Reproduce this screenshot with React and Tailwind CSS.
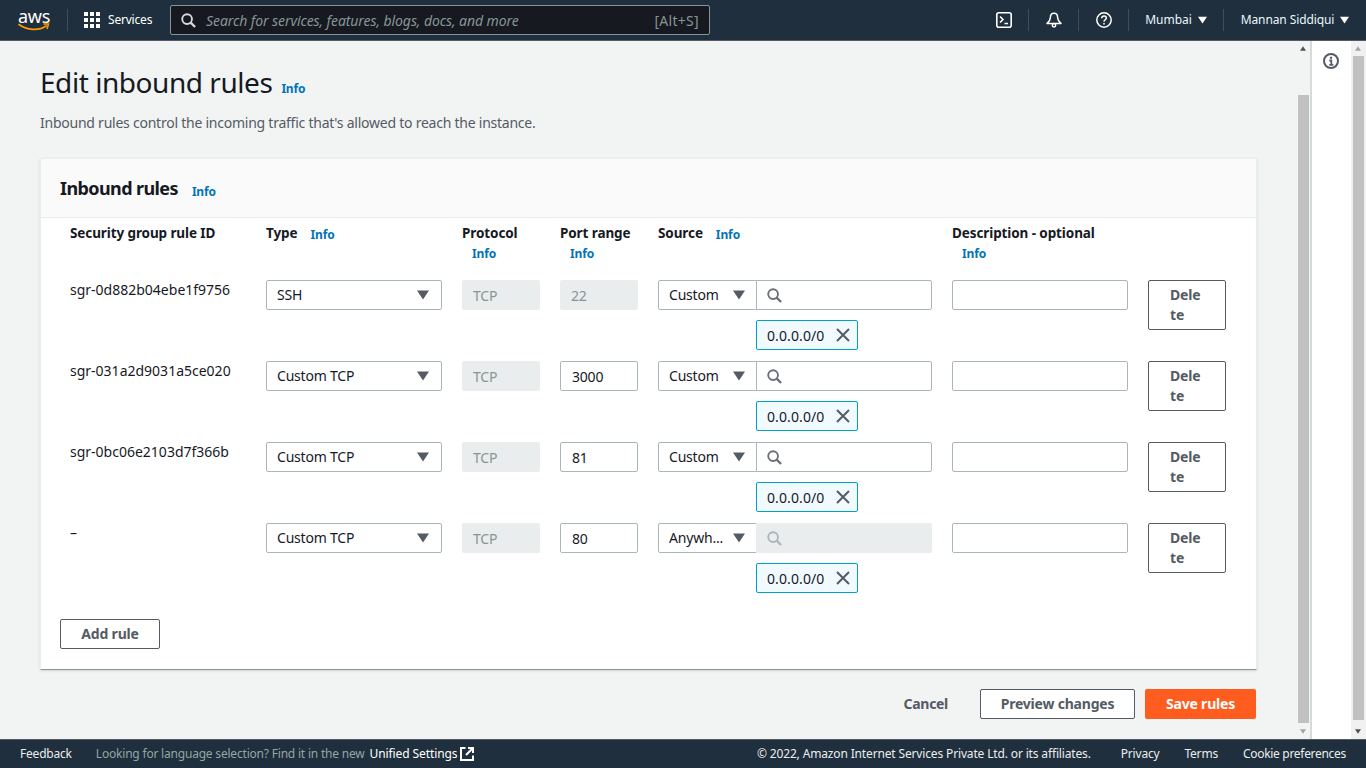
import React from "react";

const rules = [
  { id: "sgr-0d882b04ebe1f9756", type: "SSH", port: "22", portLocked: true, source: "Custom" },
  { id: "sgr-031a2d9031a5ce020", type: "Custom TCP", port: "3000", source: "Custom" },
  { id: "sgr-0bc06e2103d7f366b", type: "Custom TCP", port: "81", source: "Custom" },
  { id: "–", type: "Custom TCP", port: "80", source: "Anywh...", searchLocked: true },
];

const Info = ({ className = "" }) => (
  <a className={`text-[12px] leading-5 font-bold text-[#0073bb] ${className}`}>Info</a>
);

const Caret = ({ className = "" }) => (
  <svg viewBox="0 0 12 10" className={className} fill="currentColor">
    <path d="M0 0.5h12L6 9.5z" />
  </svg>
);

const SearchIcon = ({ className = "" }) => (
  <svg viewBox="0 0 16 16" className={className} fill="none" stroke="currentColor" strokeWidth="2">
    <circle cx="6.500" cy="6.500" r="5.200" />
    <path d="M10.300 10.300L15 15" strokeWidth="2.400" />
  </svg>
);

const CloseIcon = () => (
  <svg viewBox="0 0 14 14" className="w-[14px] h-[14px] text-[#545b64]" fill="none" stroke="currentColor" strokeWidth="2">
    <path d="M1 1l12 12M13 1L1 13" />
  </svg>
);

const Divider = () => <div className="h-[22px] w-px bg-[#414d5c]" />;

const Scrollbar = ({ spacer, thumb, topArrow, bottomArrow }) => (
  <div className="flex flex-col items-center shrink-0 w-[14px] h-full">
    <div className={`h-[15px] w-full flex items-center justify-center ${topArrow}`}>
      <Caret className="w-2 h-[5px] rotate-180" />
    </div>
    <div className={spacer} />
    <div className={`w-[11px] bg-[#c1c1c1] ${thumb}`} />
    <div className="flex-1" />
    <div className={`h-[15px] w-full flex items-center justify-center ${bottomArrow}`}>
      <Caret className="w-2 h-[5px]" />
    </div>
  </div>
);

const RuleRow = ({ rule }) => (
  <div className="grid grid-cols-[176px_176px_78px_78px_274px_176px_78px] gap-x-5 text-[14px] text-[#16191f]">
    <div className="leading-5 tracking-[0px]">{rule.id}</div>
    <div className="h-[30px] border border-[#aab7b8] rounded-[2px] bg-white flex items-center justify-between pl-[10px] pr-[12px]">
      <span className="-mt-px">{rule.type}</span>
      <Caret className="w-3 h-[10px] text-[#545b64]" />
    </div>
    <div className="h-[30px] rounded-[2px] bg-[#eaeded] text-[#879596] flex items-center px-[11px]">TCP</div>
    {rule.portLocked ? (
      <div className="h-[30px] rounded-[2px] bg-[#eaeded] text-[#879596] flex items-center px-[11px]">{rule.port}</div>
    ) : (
      <div className="h-[30px] border border-[#aab7b8] rounded-[2px] bg-white flex items-center px-[11px]">{rule.port}</div>
    )}
    <div className="flex flex-col gap-[10px]">
      <div className="flex h-[30px]">
        <div className="w-[99px] shrink-0 border border-[#aab7b8] rounded-l-[2px] bg-white flex items-center justify-between pl-[10px] pr-[11px]">
          <span className="-mt-px">{rule.source}</span>
          <Caret className="w-3 h-[10px] text-[#545b64]" />
        </div>
        {rule.searchLocked ? (
          <div className="flex-1 -ml-px rounded-r-[2px] bg-[#eaeded] flex items-center pl-[11px]">
            <SearchIcon className="w-[15px] h-[15px] text-[#aab7b8]" />
          </div>
        ) : (
          <div className="flex-1 -ml-px border border-[#aab7b8] rounded-r-[2px] bg-white flex items-center pl-[10px]">
            <SearchIcon className="w-[15px] h-[15px] text-[#687078]" />
          </div>
        )}
      </div>
      <div className="ml-[98px] w-[102px] h-[30px] border border-[#00a1c9] rounded-[2px] bg-[#f1faff] flex items-center justify-between pl-[10px] pr-[7px]">
        <span className="tracking-[0.1px]">0.0.0.0/0</span>
        <CloseIcon />
      </div>
    </div>
    <div className="h-[30px] border border-[#aab7b8] rounded-[2px] bg-white" />
    <button className="h-[50px] border border-[#545b64] rounded-[2px] bg-white text-left pl-[21px] pr-[23px] leading-5 font-bold text-[#545b64] break-all">
      Delete
    </button>
  </div>
);

export default function App() {
  return (
    <div className="w-[1366px] h-screen overflow-hidden flex flex-col bg-[#f2f3f3] font-['Noto_Sans',sans-serif] tracking-[-0.2px]">
      {/* top nav */}
      <header className="h-[41px] shrink-0 bg-[#1f2f3d] border-b border-[#545b64] flex items-center text-white text-[12px]">
        <div className="w-[67px] flex flex-col items-center pl-[1px]">
          <span className="text-[18px] leading-[14px] tracking-[-0.3px]">aws</span>
          <svg viewBox="0 0 32 9" className="w-8 h-[9px]" fill="none">
            <path d="M1 1.500c8 6 20 6.500 27 1.500" stroke="#ff9900" strokeWidth="1.800" strokeLinecap="round" />
            <path d="M25.500 1h5l-1.500 5" stroke="#ff9900" strokeWidth="1.500" />
          </svg>
        </div>
        <div className="h-[22px] w-px bg-[#414d5c]" />
        <div className="ml-[16px] grid grid-cols-3 gap-[2px] w-4">
          {Array.from({ length: 9 }).map((_, i) => (
            <span key={i} className="w-1 h-1 bg-white" />
          ))}
        </div>
        <span className="ml-2 w-[45px]">Services</span>
        <div className="ml-[17px] w-[540px] h-[30px] bg-[#16191f] border border-[#879596] rounded-[2px] flex items-center pl-[10px] pr-[10px]">
          <SearchIcon className="w-[15px] h-[15px] text-[#d5dbdb]" />
          <span className="ml-[10px] italic text-[14px] tracking-[-0.08px] text-[#879596] flex-1">Search for services, features, blogs, docs, and more</span>
          <span className="text-[14px] tracking-[0.3px] text-[#879596] mt-px">[Alt+S]</span>
        </div>
        <div className="ml-auto flex items-center">
          <div className="w-[49px] flex justify-center">
            <svg viewBox="0 0 16 16" className="w-4 h-4" fill="none" stroke="white" strokeWidth="1.600">
              <rect x="0.800" y="0.800" width="14.400" height="14.400" rx="2" />
              <path d="M4 4.500l3 3-3 3M8.500 11.500h3.500" />
            </svg>
          </div>
          <Divider />
          <div className="w-[49px] flex justify-center">
            <svg viewBox="0 0 16 16" className="w-4 h-4" fill="none" stroke="white" strokeWidth="1.500">
              <path d="M8 1.200c-2.400 0-3.600 2-3.600 4.200 0 3-2.200 4.800-3.400 6h14c-1.200-1.200-3.400-3-3.400-6 0-2.200-1.200-4.200-3.600-4.200z" strokeLinejoin="round" />
              <circle cx="8" cy="13.300" r="1.700" />
            </svg>
          </div>
          <Divider />
          <div className="w-[49px] flex justify-center">
            <svg viewBox="0 0 16 16" className="w-4 h-4" fill="none" stroke="white" strokeWidth="1.500">
              <circle cx="8" cy="8" r="7.200" />
              <path d="M5.700 6.200c0-1.400 1-2.200 2.300-2.200s2.300.8 2.300 2.100c0 1.900-2.300 1.800-2.300 3.600" />
              <path d="M8 11v1.500" />
            </svg>
          </div>
          <Divider />
          <div className="w-[94px] flex items-center justify-center gap-[6px] text-[#eaf6ff] tracking-[-0.05px]">
            Mumbai
            <Caret className="w-[9px] h-2 text-white" />
          </div>
          <Divider />
          <div className="w-[142px] flex items-center justify-center gap-[6px] text-[#eaf6ff] tracking-[-0.1px]">
            Mannan Siddiqui
            <Caret className="w-[9px] h-2 text-white" />
          </div>
        </div>
      </header>

      <div className="flex flex-1 min-h-0">
        {/* page */}
        <main className="w-[1296px] shrink-0 pt-[23px] pl-10 pr-[39px]">
          <div className="flex items-end gap-[9px]">
            <h1 className="text-[28px] leading-9 tracking-[-0.45px] text-[#16191f]">Edit inbound rules</h1>
            <Info className="mb-px" />
          </div>
          <p className="mt-[13px] text-[14px] leading-5 tracking-[-0.24px] text-[#545b64]">
            Inbound rules control the incoming traffic that's allowed to reach the instance.
          </p>

          <section className="mt-[25px] bg-white border border-[#eaeded] border-b-[#879596] shadow-sm">
            <div className="h-[59px] bg-[#fafafa] border-b border-[#eaeded] flex items-center pl-[19px] gap-[14px]">
              <h2 className="text-[18px] font-bold tracking-[-0.6px] text-[#16191f]">Inbound rules</h2>
              <Info className="mt-2" />
            </div>
            <div className="pl-[29px] pt-[5px] pb-[20px]">
              <div className="grid grid-cols-[176px_176px_78px_78px_274px_176px_78px] gap-x-5 h-[57px] text-[13.5px] leading-5 font-bold tracking-[-0.1px] text-[#16191f]">
                <div>Security group rule ID</div>
                <div className="flex gap-[13px]">
                  Type <Info className="mt-[2px]" />
                </div>
                <div className="flex flex-col">
                  Protocol
                  <Info className="ml-[10px] mt-[1px]" />
                </div>
                <div className="flex flex-col whitespace-nowrap">
                  Port range
                  <Info className="ml-[10px] mt-[1px]" />
                </div>
                <div className="flex gap-[13px]">
                  Source <Info className="mt-[2px]" />
                </div>
                <div className="flex flex-col whitespace-nowrap">
                  Description - optional
                  <Info className="ml-[10px] mt-[1px]" />
                </div>
                <div />
              </div>
              <div className="flex flex-col gap-[11px]">
                {rules.map((rule, i) => (
                  <RuleRow key={i} rule={rule} />
                ))}
              </div>
              <button className="mt-[26px] -ml-[10px] w-[100px] h-[30px] pb-px border border-[#545b64] rounded-[2px] bg-white text-[14px] font-bold text-[#545b64]">
                Add rule
              </button>
            </div>
          </section>

          <div className="mt-[19px] mr-px flex items-center justify-end text-[14px] font-bold">
            <a className="text-[#545b64] mr-[32px] -mt-px tracking-[-0.3px]">Cancel</a>
            <button className="w-[155px] h-[30px] pb-px border border-[#545b64] rounded-[2px] bg-white text-[#545b64]">
              Preview changes
            </button>
            <button className="ml-[10px] w-[111px] h-[30px] pb-px rounded-[2px] bg-[#ff5d1f] text-white">Save rules</button>
          </div>
        </main>

        <Scrollbar
          spacer="h-[39px]"
          thumb="h-[628px]"
          topArrow="text-[#505050]"
          bottomArrow="text-[#a3a3a3]"
        />

        {/* help panel rail */}
        <aside className="w-[41px] shrink-0 bg-white border-l-2 border-[#d5dbdb] flex justify-center pt-[12px] pr-px">
          <svg viewBox="0 0 16 16" className="w-4 h-4" fill="none" stroke="#545b64">
            <circle cx="8" cy="8" r="7" strokeWidth="2" />
            <path d="M8 3.800v2" strokeWidth="2.200" />
            <path d="M6.300 7.500H8.300V11.500M6.300 11.800h4" strokeWidth="1.800" />
          </svg>
        </aside>
        <div className="w-[15px] shrink-0 bg-[#f1f1f1]">
          <Scrollbar
            spacer="h-0"
            thumb="h-[664px]"
            topArrow="text-[#a3a3a3]"
            bottomArrow="text-[#505050]"
          />
        </div>
      </div>

      {/* footer */}
      <footer className="h-[29px] shrink-0 bg-[#1f2f3d] border-t border-[#545b64] flex items-center justify-between px-5 text-[12px] text-[#eaeded]">
        <div className="flex items-center">
          <span>Feedback</span>
          <span className="ml-6 text-[#95a5a6]">Looking for language selection? Find it in the new</span>
          <span className="ml-[5px] text-white tracking-[-0.1px]">Unified Settings</span>
          <svg viewBox="0 0 14 14" className="ml-[3px] w-[14px] h-[14px]" fill="none" stroke="white" strokeWidth="2">
            <path d="M5.500 1H1v12h12V8.500" />
            <path d="M8 1h5v5M13 1L6 8" />
          </svg>
        </div>
        <div className="flex items-center gap-[30px]">
          <span className="tracking-[-0.15px]">© 2022, Amazon Internet Services Private Ltd. or its affiliates.</span>
          <div className="flex items-center gap-[25px]">
            <span>Privacy</span>
            <span>Terms</span>
            <span className="tracking-[-0.3px]">Cookie preferences</span>
          </div>
        </div>
      </footer>
    </div>
  );
}
